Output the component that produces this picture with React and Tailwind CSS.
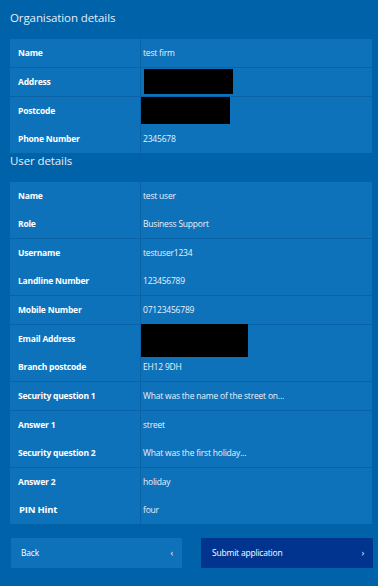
import React from "react";

const font = { fontFamily: '"Open Sans", "Noto Sans", sans-serif' };

function Row({ label, value, children, labelClass = "" }) {
  return (
    <div className="flex h-[28px]">
      <div className={"w-[131px] flex items-center pl-[8px] text-[8.5px] tracking-[-0.2px] font-bold text-white border-r border-[#0a63a7] " + labelClass}>
        {label}
      </div>
      <div className="relative flex-1 flex items-center pl-[2px] text-[8.5px] tracking-[-0.2px] text-[#e8f1fa]">
        {value}
        {children}
      </div>
    </div>
  );
}

function Group({ children }) {
  return <div className="flex flex-col">{children}</div>;
}

export default function App() {
  return (
    <div className="w-[378px] h-[586px] bg-[#0062a9] overflow-hidden" style={font}>
      <div className="pt-[9px]">
        <h2 className="pl-[10px] text-[11.5px] tracking-[-0.1px] leading-[18px] text-[#e6eef7]">Organisation details</h2>
        <div className="mt-[12px] ml-[10px] w-[362px] bg-[#0e72ba] flex flex-col divide-y divide-[#0a63a7]">
          <Group>
            <Row label="Name" value="test firm" />
          </Group>
          <Group>
            <Row label="Address">
              <div className="absolute left-[3px] top-[1px] w-[89px] h-[25px] bg-black" />
            </Row>
          </Group>
          <Group>
            <Row label="Postcode">
              <div className="absolute left-0 top-0 w-[89px] h-[27px] bg-black" />
            </Row>
            <Row label="Phone Number" value="2345678" />
          </Group>
        </div>
        <h2 className="pl-[10px] text-[11.5px] tracking-[-0.1px] leading-[18px] text-[#e6eef7] -mt-[1px]">User details</h2>
        <div className="mt-[12px] ml-[10px] w-[362px] bg-[#0e72ba] flex flex-col divide-y divide-[#0a63a7]">
          <Group>
            <Row label="Name" value="test user" />
            <Row label="Role" value="Business Support" />
          </Group>
          <Group>
            <Row label="Username" value="testuser1234" />
            <Row label="Landline Number" value="123456789" />
          </Group>
          <Group>
            <Row label="Mobile Number" value="07123456789" />
          </Group>
          <Group>
            <Row label="Email Address">
              <div className="absolute left-0 -top-[1px] w-[107px] h-[33px] bg-black z-10" />
            </Row>
            <Row label="Branch postcode" value="EH12 9DH" />
          </Group>
          <Group>
            <Row label="Security question 1" value="What was the name of the street on..." />
          </Group>
          <Group>
            <Row label="Answer 1" value="street" />
            <Row label="Security question 2" value="What was the first holiday..." />
          </Group>
          <Group>
            <Row label="Answer 2" value="holiday" />
            <Row label="PIN Hint" value="four" labelClass="pl-[9px] text-[9.5px]" />
          </Group>
        </div>
        <div className="mt-[14px] flex pl-[11px] gap-[19px]">
          <button className="shrink-0 w-[171px] h-[30px] bg-[#0e72ba] flex items-center justify-between pl-[10px] pr-[9px] text-[8.5px] tracking-[-0.2px] text-white">
            <span>Back</span>
            <span className="text-[9px]">‹</span>
          </button>
          <button className="shrink-0 w-[172px] h-[30px] bg-[#00348f] flex items-center justify-between pl-[11px] pr-[9px] text-[8.5px] tracking-[-0.2px] text-white">
            <span>Submit application</span>
            <span className="text-[9px]">›</span>
          </button>
        </div>
      </div>
    </div>
  );
}
